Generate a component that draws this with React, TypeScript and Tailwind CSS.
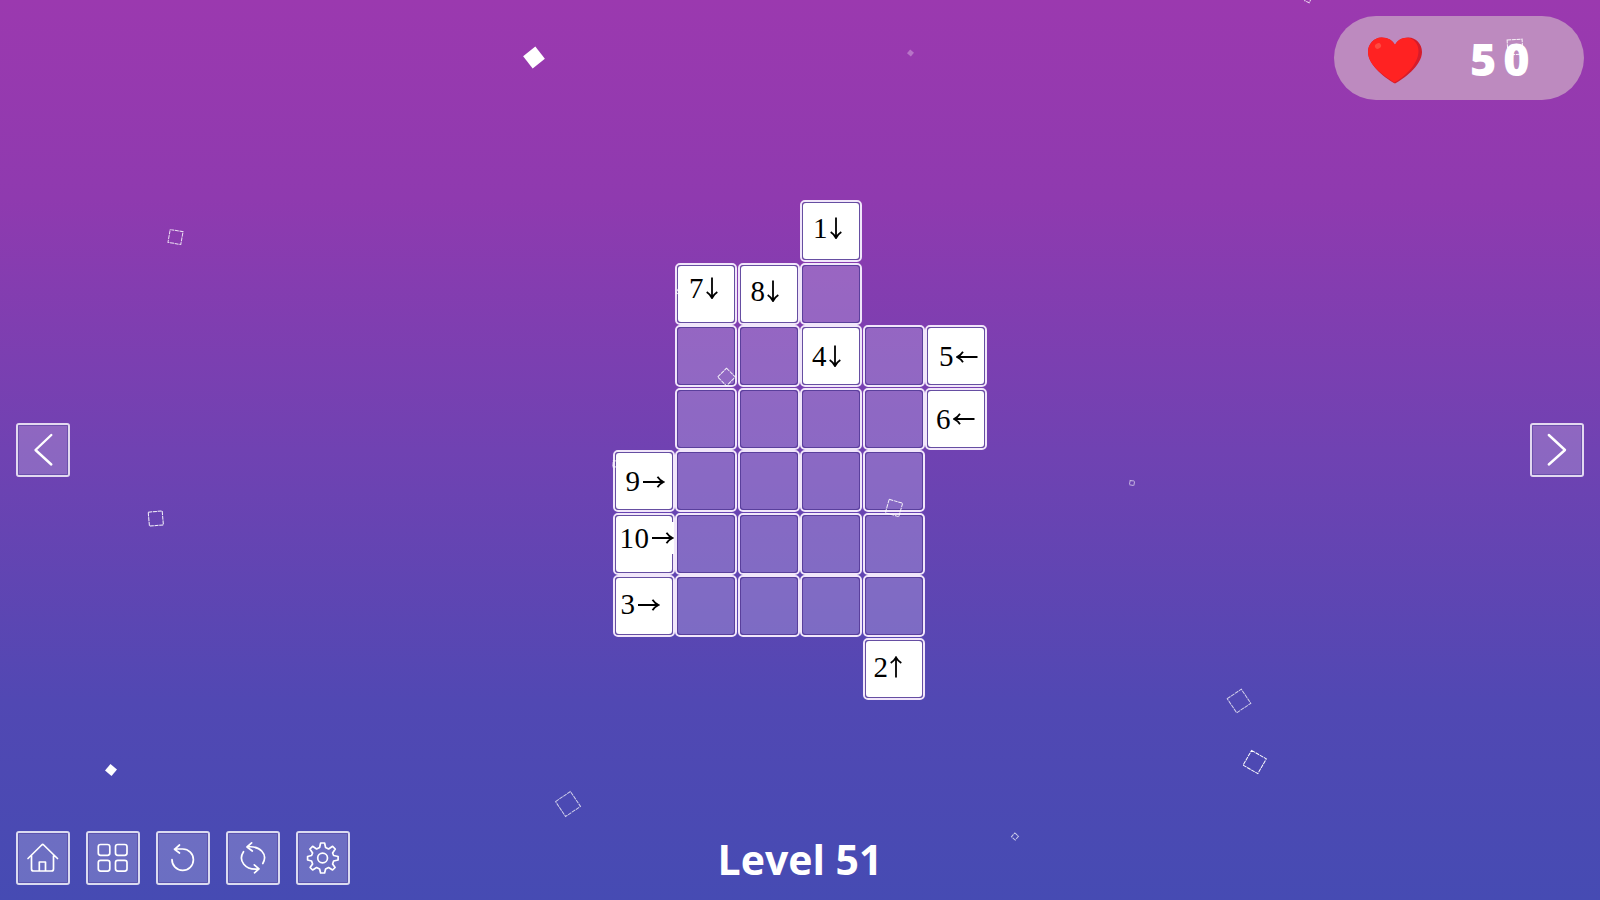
import type { ReactNode } from "react"
import clsx from "clsx"

type Clue = { n: string; arrow: "down" | "up" | "left" | "right"; pos: string }

const clues: Record<string, Clue> = {
  "0-3": { n: "1", arrow: "down", pos: "left-[11px] top-[10px]" },
  "1-1": { n: "7", arrow: "down", pos: "left-[12px] top-[7px]" },
  "1-2": { n: "8", arrow: "down", pos: "left-[11px] top-[10px]" },
  "2-3": { n: "4", arrow: "down", pos: "left-[10px] top-[13px]" },
  "2-5": { n: "5", arrow: "left", pos: "left-[12px] top-[13px]" },
  "3-5": { n: "6", arrow: "left", pos: "left-[9px] top-[13px]" },
  "4-0": { n: "9", arrow: "right", pos: "left-[11px] top-[13px]" },
  "5-0": { n: "10", arrow: "right", pos: "left-[5px] top-[7px]" },
  "6-0": { n: "3", arrow: "right", pos: "left-[6px] top-[11px]" },
  "7-4": { n: "2", arrow: "up", pos: "left-[9px] top-[11px]" },
}

// "#" clue, "o" open cell, "." nothing
const board = ["...#..", ".##o..", ".oo#o#", ".oooo#", "#oooo.", "#oooo.", "#oooo.", "....#."]

const arrows = {
  down: "M6 0V20.5M0.7 14.5Q4.2 16.8 6 20.5Q7.8 16.8 11.3 14.5",
  up: "M6 21V0.8M0.7 6.5Q4.2 4.2 6 0.8Q7.8 4.2 11.3 6.5",
  left: "M21.5 6H1M7 0.7Q4.8 4.2 1 6Q4.8 7.8 7 11.3",
  right: "M0 6H20.5M14.5 0.7Q16.8 4.2 20.5 6Q16.8 7.8 14.5 11.3",
}

function ClueLabel({ n, arrow, pos }: Clue) {
  const vertical = arrow === "down" || arrow === "up"
  return (
    <div className={clsx("absolute z-10 flex h-8 items-center bg-white text-black", pos)}>
      <span className="font-['Liberation_Serif',serif] text-[29px] leading-8 tracking-[0.5px]">{n}</span>
      <svg
        className={vertical ? "ml-[1.5px] h-[22px] w-3" : "ml-[2px] mt-[1px] h-3 w-[22px]"}
        viewBox={vertical ? "0 0 12 21" : "0 0 22 12"}
        fill="none"
        stroke="currentColor"
        strokeWidth="1.8"
      >
        <path d={arrows[arrow]} />
      </svg>
    </div>
  )
}

function Cell({ kind, clue }: { kind: string; clue?: Clue }) {
  if (kind === ".") return <div />
  return (
    <div className="relative h-[62px] w-[62px] rounded-[5px] border-2 border-[#f1e6fa]">
      <div
        className={clsx(
          "h-full w-full rounded-[4px] border border-[#553b98]/90",
          clue ? "bg-white" : "bg-[#bdafe4]/36",
        )}
      />
      {clue && <ClueLabel {...clue} />}
    </div>
  )
}

function IconButton({ label, children }: { label: string; children: ReactNode }) {
  return (
    <button
      aria-label={label}
      className="h-[54px] w-[54px] shrink-0 rounded-[3px] border-2 border-white/80"
    >
      <span className="flex h-full w-full items-center justify-center border border-[#4b3a98]/50 bg-white/20">
        <svg
          className="h-12 w-12 shrink-0 text-white"
          viewBox="0 0 48 48"
          fill="none"
          stroke="currentColor"
          strokeWidth="1.7"
          strokeLinecap="round"
          strokeLinejoin="round"
        >
          {children}
        </svg>
      </span>
    </button>
  )
}

const particles = [
  { x: 534, y: 57.5, s: 15.5, r: -38, o: 1, fill: true },
  { x: 111, y: 770, s: 8.5, r: 40, o: 1, fill: true },
  { x: 910.5, y: 53, s: 5, r: 40, o: 0.3, fill: true },
  { x: 175.5, y: 237, s: 13, r: 10, o: 0.85 },
  { x: 155.8, y: 518.5, s: 14, r: -5, o: 0.95 },
  { x: 726.5, y: 377, s: 12.5, r: 45, o: 0.9 },
  { x: 894, y: 508, s: 14, r: 16, o: 0.9 },
  { x: 1239, y: 701, s: 17, r: -34, o: 0.75 },
  { x: 1254.7, y: 762, s: 17, r: 30, o: 1 },
  { x: 568, y: 804, s: 18, r: -34, o: 0.75 },
  { x: 1132, y: 483, s: 4.5, r: 10, o: 0.6 },
  { x: 1015, y: 836.5, s: 5, r: 40, o: 0.7 },
  { x: 1515, y: 47, s: 15, r: -3, o: 0.9 },
  { x: 1308, y: -0.5, s: 5, r: 25, o: 0.8 },
  { x: 616, y: 464, s: 6, r: 5, o: 0.8 },
  { x: 679, y: 292, s: 4, r: 20, o: 0.8 },
]

export default function App() {
  return (
    <div className="relative flex h-[900px] w-[1600px] flex-col overflow-hidden bg-[linear-gradient(180deg,#9b39af_0%,#8f3aaf_22%,#7042b2_50%,#5148b3_78%,#464bb3_100%)] px-4 pt-4 pb-[15px] font-['Open_Sans',sans-serif] text-white">
      <header className="flex justify-end">
        <div className="flex h-[84px] w-[250px] items-center rounded-full bg-[#bd8abf] pl-[33px]">
          <svg className="mt-[5px] h-[47px] w-[56px]" viewBox="0 0 56 47">
            <path
              d="M28 46.500C21 43 1 29 1 15C1 7 7 .5 14.500 .5C21 .5 26 3.500 28 8C30 3.500 35 .5 41.500 .5C49 .5 55 7 55 15C55 29 35 43 28 46.500Z"
              fill="#d51c2b"
            />
            <path
              d="M27.500 45.500C19 40 1 29 1 15C1 7 7 .5 14.500 .5C21 .5 26 3.500 28 8C30 3.500 34 .7 40 .7C47 1 51.500 7 51.500 14C51.500 28 36 41 27.500 45.500Z"
              fill="#ff2222"
            />
            <ellipse cx="11" cy="9" rx="3.200" ry="2.600" fill="#ff4a40" transform="rotate(-30 11 9)" />
          </svg>
          <span className="ml-[47px] text-[45px] leading-none font-extrabold tracking-[7px]">50</span>
        </div>
      </header>

      <main className="mt-[100px] flex h-[500px] items-center justify-between">
        <IconButton label="Previous level">
          <path d="M32.300 9L16.500 24L32.300 38.500" strokeWidth="2.400" />
        </IconButton>
        <div className="grid grid-cols-[repeat(6,62.5px)] grid-rows-[repeat(8,62.5px)]">
          {board.flatMap((row, y) =>
            row.split("").map((kind, x) => <Cell key={`${y}-${x}`} kind={kind} clue={clues[`${y}-${x}`]} />),
          )}
        </div>
        <IconButton label="Next level">
          <path d="M15.800 9L32 24L15.800 38.500" strokeWidth="2.400" />
        </IconButton>
      </main>

      <footer className="relative mt-auto flex h-[54px] items-center justify-center">
        <nav className="absolute left-0 flex gap-4">
          <IconButton label="Home">
            <path d="M9 24.500L22.700 11Q23.700 10 24.700 11L38.500 24.500M12.500 21.500V35Q12.500 37 14.500 37H32.500Q34.500 37 34.500 35V21.500M20.300 37V28H26.500V37" />
          </IconButton>
          <IconButton label="Levels">
            <rect x="9.300" y="10.500" width="11.500" height="10.800" rx="2.300" />
            <rect x="26.500" y="10.500" width="11.500" height="10.800" rx="2.300" />
            <rect x="9.300" y="26.300" width="11.500" height="10.800" rx="2.300" />
            <rect x="26.500" y="26.300" width="11.500" height="10.800" rx="2.300" />
          </IconButton>
          <IconButton label="Undo">
            <path d="M13 25.500A10.700 10.700 0 1 0 23.700 15H15.500M20.500 11L15.500 15.300L20.500 19" />
          </IconButton>
          <IconButton label="Restart">
            <path d="M14.500 17.700C8.800 26.500 16 36.500 29.500 34.900M25.300 30.800L30 34.900L25.500 38.800M18 13C31.500 11.300 39 20.500 33.800 29.500M22.600 8.900L18 13L23.300 17" />
          </IconButton>
          <IconButton label="Settings">
            <g transform="translate(-0.4 -0.5)">
              <circle cx="24" cy="24.500" r="4.900" />
              <path d="M22 9.500H26L27 14L30 15.500L34 12.800L36.700 15.500L34 19.500L35 22L39.500 23V26.500L35 27.500L34 30.500L36.500 34L34 36.500L30 34L27 35.500L26 39.500H22L21 35.500L18 34L14 36.500L11.500 34L14 30.500L13 27.500L9 26.500V23L13 22L14 19.500L11.300 15.500L14 12.800L18 15.500L21 14Z" />
            </g>
          </IconButton>
        </nav>
        <h1 className="mt-[2px] text-[41px] leading-none font-bold">Level 51</h1>
      </footer>

      <svg className="pointer-events-none absolute inset-0 h-full w-full" viewBox="0 0 1600 900">
        {particles.map((p) => (
          <rect
            key={`${p.x}-${p.y}`}
            x={p.x - p.s / 2}
            y={p.y - p.s / 2}
            width={p.s}
            height={p.s}
            transform={`rotate(${p.r} ${p.x} ${p.y})`}
            opacity={p.o}
            fill={p.fill ? "#fff" : "none"}
            stroke={p.fill ? "none" : "#fff"}
            strokeDasharray="4 0.7"
          />
        ))}
      </svg>
    </div>
  )
}
